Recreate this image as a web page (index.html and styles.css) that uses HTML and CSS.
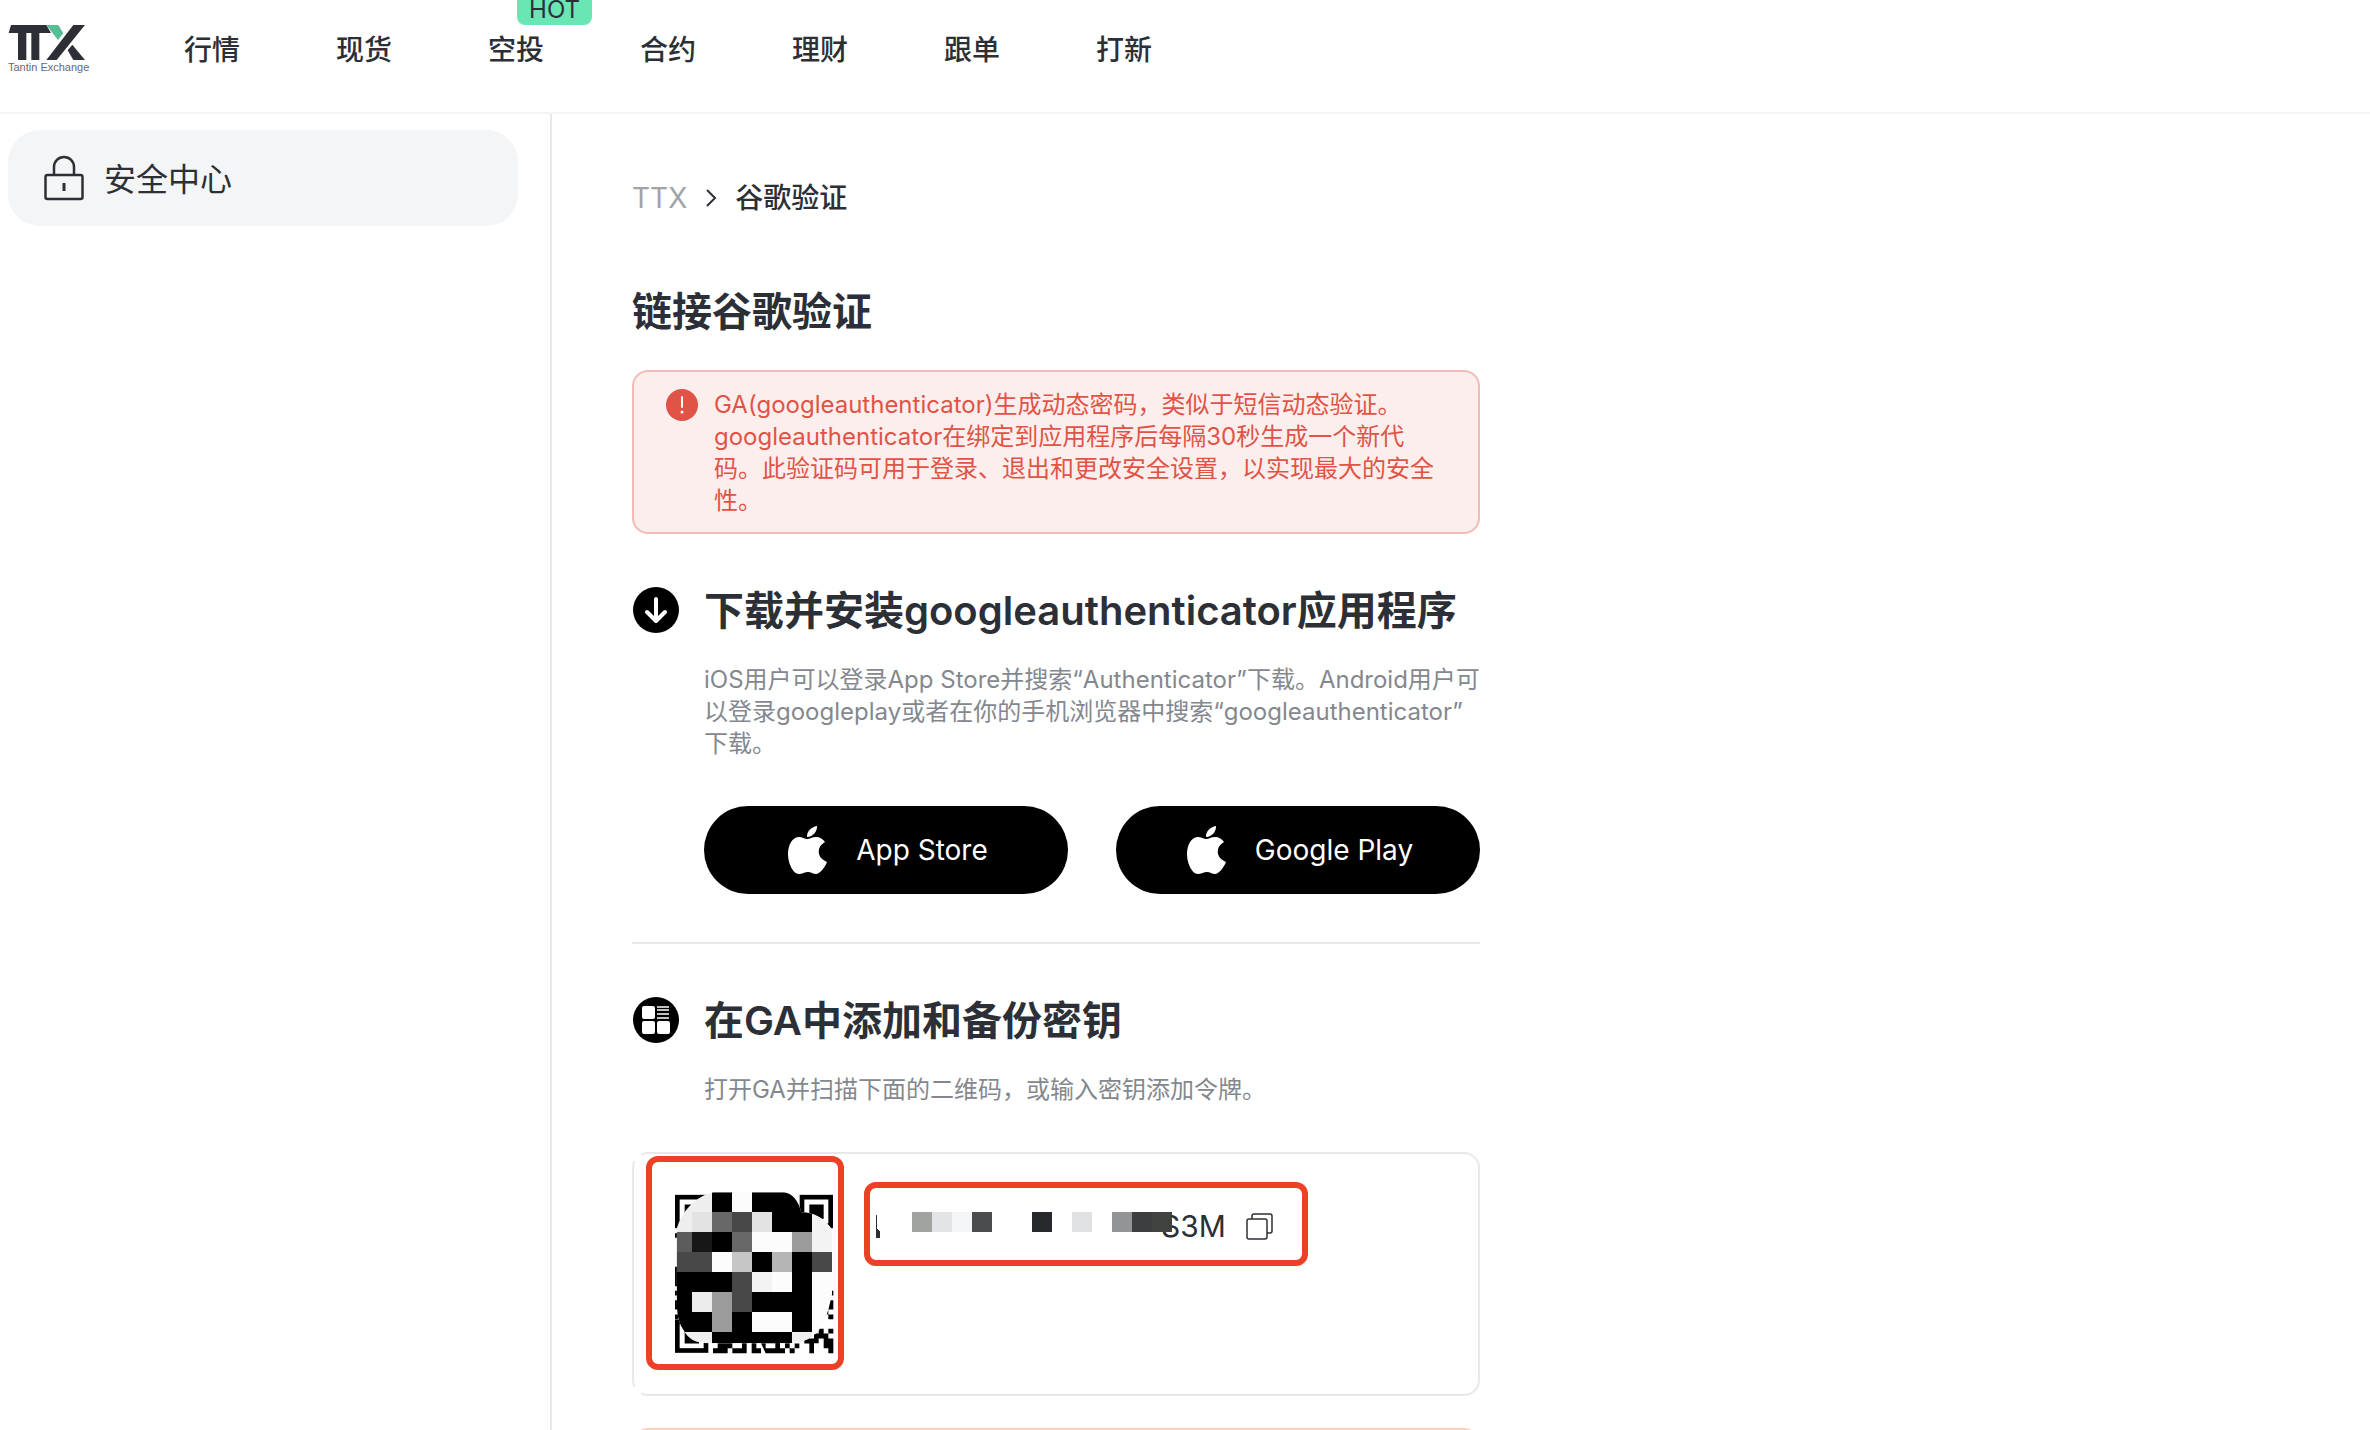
FILE: index.html
```
<!DOCTYPE html>
<html lang="zh-CN">
<head>
  <meta charset="UTF-8">
  <title>谷歌验证 - TTX</title>
  <link rel="stylesheet" href="styles.css">
</head>
<body>
  <header class="header">
    <a href="#" class="logo">
      <svg class="logo-mark" width="80" height="36" viewBox="26 45 240 108">
        <path fill="#2c3036" d="M35 45H141L155 69H120V150H96V69H81V150H56V69H28Z"/>
        <path fill="#56bd95" d="M141 45H177L192 70L176 90Z"/>
        <path fill="#2c3036" d="M222 45H257L172 150H141Z"/>
        <path fill="#2c3036" d="M205 121L219 104L257 150H222Z"/>
      </svg>
      <span class="logo-text">Tantin Exchange</span>
    </a>
    <nav class="nav">
      <a href="#">行情</a>
      <a href="#">现货</a>
      <a href="#">空投<span class="hot">HOT</span></a>
      <a href="#">合约</a>
      <a href="#">理财</a>
      <a href="#">跟单</a>
      <a href="#">打新</a>
    </nav>
  </header>

  <div class="layout">
    <aside class="sidebar">
      <a href="#" class="side-item">
        <svg width="48" height="56" viewBox="0 0 48 56" fill="none" stroke="#2c3036" stroke-width="2.500">
          <rect x="5.500" y="26" width="37" height="24" rx="2"/>
          <path d="M14 26V18a10 10 0 0 1 20 0V26"/>
          <path d="M24 34V42" stroke-width="3"/>
        </svg>
        <span>安全中心</span>
      </a>
    </aside>

    <main class="content">
      <div class="breadcrumb">
        <a href="#">TTX</a>
        <svg width="12" height="20" viewBox="0 0 12 20" fill="none" stroke="#2c3036" stroke-width="2">
          <path d="M2 2L10 10L2 18"/>
        </svg>
        <span>谷歌验证</span>
      </div>

      <h1 class="title">链接谷歌验证</h1>

      <div class="alert">
        <svg width="32" height="32" viewBox="0 0 32 32">
          <circle cx="16" cy="16" r="16" fill="#e05447"/>
          <rect x="15" y="7" width="2" height="12" rx="1" fill="#fff"/>
          <circle cx="16" cy="23" r="1.500" fill="#fff"/>
        </svg>
        <p>GA(googleauthenticator)生成动态密码，类似于短信动态验证。googleauthenticator在绑定到应用程序后每隔30秒生成一个新代码。此验证码可用于登录、退出和更改安全设置，以实现最大的安全性。</p>
      </div>

      <section class="step">
        <svg class="step-icon" width="48" height="48" viewBox="0 0 48 48">
          <circle cx="24" cy="24" r="23"/>
          <path d="M24 13V35M15 26L24 35L33 26" fill="none" stroke="#fff" stroke-width="4" stroke-linecap="round" stroke-linejoin="round"/>
        </svg>
        <div class="step-body">
          <h2>下载并安装googleauthenticator应用程序</h2>
          <p>iOS用户可以登录App Store并搜索“Authenticator”下载。Android用户可以登录googleplay或者在你的手机浏览器中搜索“googleauthenticator”下载。</p>
          <div class="stores">
            <button type="button" class="store">
              <svg width="48" height="48" viewBox="0 0 48 48" fill="#fff">
                <path d="M33 0C33.500 5 29 11 23 11C22.500 6 27 1 33 0Z"/>
                <path d="M23 13C26 13 28 11 32 11C36 11 39 13 41 16C36 19 34 23 35 28C36 32 39 34 43 36C41 41 36 48 32 48C29 48 27 46 24 46C21 46 18 48 15 48C9 48 4 37 4 28C4 18 9 11 15 11C18 11 21 13 23 13Z"/>
              </svg>
              App Store
            </button>
            <button type="button" class="store">
              <svg width="48" height="48" viewBox="0 0 48 48" fill="#fff">
                <path d="M33 0C33.500 5 29 11 23 11C22.500 6 27 1 33 0Z"/>
                <path d="M23 13C26 13 28 11 32 11C36 11 39 13 41 16C36 19 34 23 35 28C36 32 39 34 43 36C41 41 36 48 32 48C29 48 27 46 24 46C21 46 18 48 15 48C9 48 4 37 4 28C4 18 9 11 15 11C18 11 21 13 23 13Z"/>
              </svg>
              Google Play
            </button>
          </div>
        </div>
      </section>

      <hr class="divider">

      <section class="step">
        <svg class="step-icon" width="48" height="48" viewBox="0 0 48 48">
          <circle cx="24" cy="24" r="23"/>
          <g fill="#fff">
            <rect x="10" y="10" width="13" height="13" rx="2"/>
            <rect x="10" y="25" width="13" height="13" rx="2"/>
            <rect x="25" y="25" width="13" height="13" rx="2"/>
          </g>
          <path d="M25 11H37M25 14H37M25 18H37M25 22H37" stroke="#fff" stroke-width="1.500"/>
        </svg>
        <div class="step-body">
          <h2>在GA中添加和备份密钥</h2>
          <p>打开GA并扫描下面的二维码，或输入密钥添加令牌。</p>
        </div>
      </section>

      <div class="secret-card">
        <div class="marker qr-box">
          <svg width="160" height="163" viewBox="42 34 480 488">
            <defs>
              <clipPath id="blob">
                <path d="M50 150C64 96 106 50 160 37H372C398 40 414 62 424 97C460 96 496 116 516 150V345C506 380 500 446 450 474C430 486 412 490 390 490H140C104 490 84 474 70 450C50 420 50 380 50 340Z"/>
              </clipPath>
            </defs>
            <!-- finder patterns -->
            <g fill="none" stroke="#000" stroke-width="14">
              <rect x="52" y="52" width="86" height="86"/>
              <rect x="426" y="52" width="86" height="86"/>
              <rect x="52" y="426" width="86" height="86"/>
            </g>
            <rect x="74" y="74" width="43" height="43"/>
            <rect x="448" y="74" width="43" height="43"/>
            <rect x="74" y="448" width="43" height="43"/>
            <!-- loose modules round the edge -->
            <path d="M45 160h10v14h-10zM45 261h10v58h-10zM45 333h10v14h-10zM45 361h10v28h-10zM45 404h10v14h-10z"/>
            <path d="M159 505h14v-15h44v15h-14v15h-44zM217 505h29v-15h14v30h-43zM275 490h14v15h14v15h-28zM303 490h14v15h29v-15h14v30h-43zM317 476h43v14h-43zM375 490h14v15h-14zM360 505h15v15h-15zM404 491h14v14h-14v15h-15v-15h15zM433 476h29v44h-14v-29h-15z"/>
            <path d="M505 361h15v28h-15zM491 389h14v15h15v14h-15v-14h-14zM505 333h15v14h-15zM476 447h15v14h14v-14h15v14h-15v15h-29v14h-14v-29h14zM491 476h29v44h-15v-15h-14z"/>
            <!-- pixelated area -->
            <g clip-path="url(#blob)" shape-rendering="crispEdges">
              <rect x="36" y="36" width="484" height="456" fill="#fcfcfc"/>
              <path fill="#eee" d="M36 36H156V96H96V156H36zM36 456H156V492H36zM396 456H456V492H396z"/>
              <path fill="#e3e3e3" d="M96 96h60v60h-60zM276 96h60v60h-60z"/>
              <path fill="#000" d="M156 36h60v60h-60zM276 36h180v120h-120v-60h-60zM156 156h60v60h-60zM276 216h60v60h-60zM396 216h60v240h-60v-60h-120v-60h120zM36 276h180v60h-120v60h60v60h-120zM216 396h60v60h120v36h-240v-36h60z"/>
              <path fill="#171717" d="M96 156h60v60h-60z"/>
              <path fill="#686868" d="M156 96h60v60h-60zM216 156h60v60h-60z"/>
              <path fill="#5c5c5c" d="M36 156h60v60h-60z"/>
              <path fill="#484848" d="M216 96h60v60h-60zM36 216h120v60h-120zM456 216h60v60h-60zM216 276h60v120h-60z"/>
              <path fill="#9b9b9b" d="M396 156h60v60h-60zM156 336h60v120h-60z"/>
              <path fill="#c6c6c6" d="M216 216h60v60h-60z"/>
              <path fill="#b5b5b5" d="M336 216h60v60h-60z"/>
              <path fill="#f3f3f3" d="M456 96h64v120h-64zM276 276h60v60h-60z"/>
              <path fill="#ebebeb" d="M96 336h60v60h-60z"/>
            </g>
          </svg>
        </div>
        <div class="marker key-box">
          <svg class="key-mask" width="296" height="48" viewBox="0 2 296 48" shape-rendering="crispEdges">
            <path fill="#2c3036" d="M0 15H1V28L4 32V38H0Z"/>
            <rect x="36" y="12" width="20" height="20" fill="#a1a3a1"/>
            <rect x="56" y="12" width="20" height="20" fill="#e3e4e6"/>
            <rect x="76" y="12" width="20" height="20" fill="#f4f5f7"/>
            <rect x="96" y="12" width="20" height="20" fill="#4a4b4d"/>
            <rect x="156" y="12" width="20" height="20" fill="#27282b"/>
            <rect x="196" y="12" width="20" height="20" fill="#e0e1e3"/>
            <rect x="236" y="12" width="20" height="20" fill="#939496"/>
            <rect x="256" y="12" width="20" height="20" fill="#3d3e40"/>
            <rect x="276" y="12" width="20" height="20" fill="#40423f"/>
          </svg>
          <span class="key-text">S3M</span>
          <button type="button" class="copy" aria-label="复制">
            <svg width="28" height="28" viewBox="0 0 28 28" fill="none" stroke="#2c3036" stroke-width="1.500">
              <rect x="1" y="7" width="20" height="20" rx="2"/>
              <path d="M6 7V4a2 2 0 0 1 2-2H24a2 2 0 0 1 2 2V19a2 2 0 0 1-2 2H21"/>
            </svg>
          </button>
        </div>
      </div>

      <div class="notice"></div>
    </main>
  </div>
</body>
</html>
```
FILE: styles.css
```
* {
  box-sizing: border-box;
}
body {
  margin: 0;
  height: 100vh;
  overflow: hidden;
  display: flex;
  flex-direction: column;
  background: #fff;
  color: #2c3036;
  font-family: Inter, "Noto Sans CJK SC", sans-serif;
}
a {
  color: inherit;
  text-decoration: none;
}
h1, h2, p {
  margin: 0;
}
svg {
  display: block;
  flex-shrink: 0;
}
button {
  border: none;
  padding: 0;
  font-family: inherit;
  cursor: pointer;
}

/* header */
.header {
  display: flex;
  align-items: flex-start;
  flex-shrink: 0;
  height: 114px;
  padding: 22px 8px 0;
  border-bottom: 2px solid #f5f5f5;
}
.logo {
  width: 80px;
  margin-right: 48px;
  padding-top: 3px;
}
.logo-text {
  display: block;
  font-family: "Liberation Sans", Arial, sans-serif;
  font-size: 11px;
  line-height: 12px;
  color: #666a70;
  white-space: nowrap;
}
.nav {
  display: flex;
}
.nav a {
  position: relative;
  padding: 0 48px;
  font-size: 28px;
  font-weight: 500;
  line-height: 56px;
}
.nav .hot {
  position: absolute;
  top: -22px;
  right: 0;
  padding: 0 12px 5px;
  border-radius: 0 0 8px 8px;
  background: #69e6b4;
  font-size: 24px;
  font-weight: 400;
  line-height: 20px;
}

/* sidebar */
.layout {
  display: flex;
  flex: 1;
  min-height: 0;
}
.sidebar {
  flex-shrink: 0;
  width: 552px;
  padding: 16px 32px 0 8px;
  border-right: 2px solid #e8e8e8;
}
.side-item {
  display: flex;
  align-items: center;
  gap: 16px;
  height: 96px;
  padding: 0 32px 2px;
  border-radius: 32px;
  background: #f4f5f7;
  font-size: 32px;
}

/* content */
.content {
  flex: 1;
  max-width: 928px;
  padding: 64px 0 0 80px;
}
.breadcrumb {
  display: flex;
  align-items: center;
  gap: 18px;
  font-size: 28px;
  font-weight: 500;
  line-height: 40px;
}
.breadcrumb a {
  color: #a1a3a7;
  font-weight: 400;
}
.title {
  margin-top: 64px;
  font-size: 40px;
  font-weight: 600;
  line-height: 60px;
}
.alert {
  display: flex;
  gap: 16px;
  margin-top: 28px;
  padding: 17px 32px 15px;
  border: 2px solid #f3bbb5;
  border-radius: 16px;
  background: #fceeec;
  color: #e05447;
}
.alert p {
  font-size: 24px;
  line-height: 32px;
}

/* steps */
.step {
  display: flex;
  gap: 24px;
  margin-top: 48px;
}
.step-icon {
  margin-top: 4px;
}
.step-body {
  flex: 1;
}
.step h2 {
  font-size: 40px;
  font-weight: 600;
  line-height: 58px;
  white-space: nowrap;
}
.step p {
  margin-top: 24px;
  font-size: 24px;
  line-height: 32px;
  color: #84888e;
}
.stores {
  display: flex;
  gap: 48px;
  margin-top: 46px;
}
.store {
  display: flex;
  flex: 1;
  align-items: center;
  justify-content: center;
  gap: 24px;
  height: 88px;
  border-radius: 44px;
  background: #000;
  color: #fff;
  font-size: 28px;
}
.divider {
  height: 2px;
  margin: 48px 0 0;
  border: none;
  background: #e8e8e8;
}

/* secret key */
.secret-card {
  position: relative;
  display: flex;
  align-items: flex-start;
  gap: 20px;
  margin-top: 46px;
  padding: 2px 12px 24px;
  border: 2px solid #e8e8e8;
  border-radius: 16px;
}
/* open corners on the left side */
.secret-card::before,
.secret-card::after {
  content: "";
  position: absolute;
  left: -2px;
  width: 9px;
  height: 9px;
  background: #fff;
}
.secret-card::before {
  top: -2px;
}
.secret-card::after {
  bottom: -2px;
}
.marker {
  border: 6px solid #ec4127;
  border-radius: 12px;
}
.qr-box {
  padding: 29px 10px 10px 22px;
  width: 198px;
  height: 214px;
}
.key-box {
  display: flex;
  align-items: center;
  height: 84px;
  margin-top: 26px;
  padding: 4px 28px 0 6px;
}
.key-mask {
  position: relative;
  z-index: 1;
}
.key-text {
  margin-left: -11px;
  font-size: 30px;
  line-height: 40px;
}
.copy {
  margin-left: 20px;
  background: none;
}
.notice {
  height: 160px;
  margin-top: 32px;
  border: 2px solid #f8d3b9;
  border-radius: 16px;
}
```
